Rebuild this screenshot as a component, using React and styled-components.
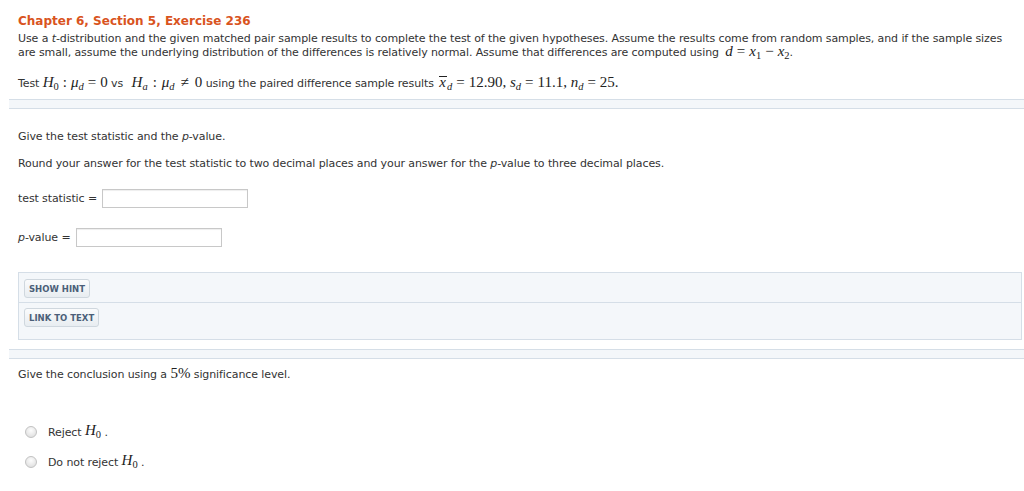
import React from "react";
import styled, { createGlobalStyle } from "styled-components";

const GlobalStyle = createGlobalStyle`
  body {
    margin: 0;
    background: #fff;
    font-family: "DejaVu Sans", Verdana, sans-serif;
    font-size: 11px;
    letter-spacing: -0.1px;
    color: #333;
  }
`;

const Page = styled.div`
  padding: 14px 0 20px 9px;
`;

const Block = styled.div`
  padding-left: 9px;
  padding-right: 4px;
`;

const Title = styled.h3`
  margin: 0 0 4px;
  font-size: 12px;
  font-weight: bold;
  letter-spacing: 0;
  color: #d9541e;
  line-height: 14px;
`;

const Para = styled.p`
  margin: ${p => p.$mt || 0}px 0 0;
  line-height: 14px;
`;

const Math = styled.span`
  font-family: "Liberation Serif", "Times New Roman", serif;
  font-size: 15px;
  line-height: 0;
  letter-spacing: 0;
  color: #222;
  margin-left: ${p => p.$ml || 0}px;
`;

const V = styled.i`
  font-style: italic;
`;

const Bar = styled.i`
  display: inline-block;
  font-style: italic;
  line-height: 9px;
  border-top: 1px solid #222;
  padding: 1px 1px 0 0;
`;

const Rel = styled.span`
  padding: 0 ${p => p.$space || 4}px;
`;

const Sub = styled.sub`
  font-size: 10.5px;
  vertical-align: -3px;
  line-height: 0;
`;

const Separator = styled.div`
  height: 8px;
  margin: ${p => p.$mt}px 0 ${p => p.$mb}px;
  background: #f4f7fa;
  border-top: 1px solid #d5dee7;
  border-bottom: 1px solid #d5dee7;
`;

const FieldRow = styled.div`
  display: flex;
  align-items: center;
  gap: 5px;
  margin-top: ${p => p.$mt}px;
  height: 19px;
`;

const Input = styled.input`
  box-sizing: border-box;
  width: 146px;
  height: 19px;
  border: 1px solid #c8c8c8;
  box-shadow: inset 0 1px 1px #eee;
  padding: 0 3px;
  margin: 0;
`;

const HintPanel = styled.div`
  margin: 25px 2px 0 9px;
  border: 1px solid #d5dee7;
  background: #f4f7fa;
`;

const HintRow = styled.div`
  padding: ${p => p.$pad};
  border-top: ${p => (p.$divider ? "1px solid #d5dee7" : "none")};
`;

const Button = styled.button`
  display: block;
  box-sizing: border-box;
  height: 19px;
  padding: 0 4px;
  font-family: "DejaVu Sans", Verdana, sans-serif;
  font-size: 8.5px;
  font-weight: bold;
  letter-spacing: 0;
  color: #4b5f78;
  background: linear-gradient(#fafbfc, #e8edf1);
  border: 1px solid #cfd7de;
  border-radius: 3px;
`;

const Options = styled.div`
  margin-top: 41px;
  padding-left: 7px;
  display: flex;
  flex-direction: column;
  gap: 12px;
`;

const Option = styled.label`
  display: flex;
  align-items: center;
  height: 18px;
`;

const Radio = styled.span`
  box-sizing: border-box;
  width: 12px;
  height: 12px;
  border-radius: 50%;
  border: 1px solid #c2c2c2;
  background: radial-gradient(circle at 50% 35%, #fdfdfd, #d9d9d9);
  margin-right: 11px;
`;

const H0 = () => (
  <Math>
    <V>H</V>
    <Sub>0</Sub>
  </Math>
);

const SubD = () => (
  <Sub>
    <V>d</V>
  </Sub>
);

export default function App() {
  return (
    <Page>
      <GlobalStyle />
      <Block>
        <Title>Chapter 6, Section 5, Exercise 236</Title>
        <Para>
          Use a <i>t</i>-distribution and the given matched pair sample results to complete the
          test of the given hypotheses. Assume the results come from random samples, and if the
          sample sizes are small, assume the underlying distribution of the differences is
          relatively normal. Assume that differences are computed using{" "}
          <Math $ml={3}>
            <V>d</V>
            <Rel>=</Rel>
            <V>x</V>
            <Sub>1</Sub>
            <Rel $space={4}>−</Rel>
            <V>x</V>
            <Sub>2</Sub>
          </Math>
          .
        </Para>
        <Para $mt={16}>
          Test{" "}
          <Math>
            <V>H</V>
            <Sub>0</Sub>
            <Rel>:</Rel>
            <V>μ</V>
            <SubD />
            <Rel>=</Rel>0
          </Math>{" "}
          vs{" "}
          <Math $ml={5}>
            <V>H</V>
            <Sub>
              <V>a</V>
            </Sub>
            <Rel $space={5}>:</Rel>
            <V>μ</V>
            <SubD />
            <Rel $space={6}>≠</Rel>0
          </Math>{" "}
          using the paired difference sample results{" "}
          <Math $ml={2}>
            <Bar>x</Bar>
            <SubD />
            <Rel>=</Rel>12.90, <V>s</V>
            <SubD />
            <Rel>=</Rel>11.1, <V>n</V>
            <SubD />
            <Rel>=</Rel>25.
          </Math>
        </Para>
      </Block>

      <Separator $mt={8} $mb={21} />

      <Block>
        <Para>
          Give the test statistic and the <i>p</i>-value.
        </Para>
        <Para $mt={13}>
          Round your answer for the test statistic to two decimal places and your answer for the{" "}
          <i>p</i>-value to three decimal places.
        </Para>
        <FieldRow $mt={18}>
          test statistic = <Input type="text" />
        </FieldRow>
        <FieldRow $mt={20}>
          <span>
            <i>p</i>-value =
          </span>
          <Input type="text" />
        </FieldRow>
      </Block>

      <HintPanel>
        <HintRow $pad="6px 5px 4px">
          <Button>SHOW HINT</Button>
        </HintRow>
        <HintRow $divider $pad="5px 5px 12px">
          <Button>LINK TO TEXT</Button>
        </HintRow>
      </HintPanel>

      <Separator $mt={9} $mb={9} />

      <Block>
        <Para>
          Give the conclusion using a <Math>5%</Math> significance level.
        </Para>
        <Options>
          <Option>
            <Radio />
            Reject&nbsp;
            <H0 />
            &nbsp;.
          </Option>
          <Option>
            <Radio />
            Do not reject&nbsp;
            <H0 />
            &nbsp;.
          </Option>
        </Options>
      </Block>
    </Page>
  );
}
